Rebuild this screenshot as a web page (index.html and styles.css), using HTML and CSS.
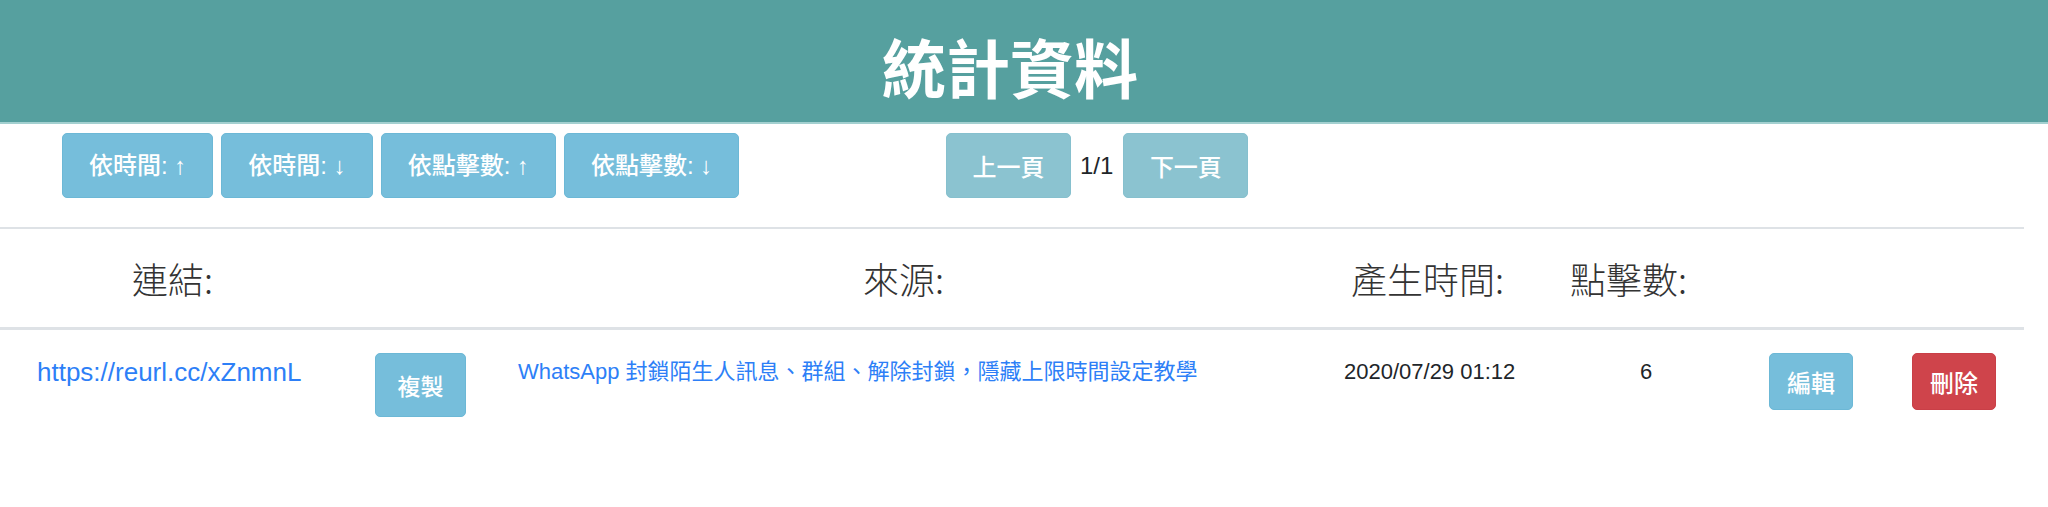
FILE: index.html
```html
<!DOCTYPE html>
<html lang="zh-Hant">
<head>
<meta charset="utf-8">
<title>統計資料</title>
<link rel="stylesheet" href="styles.css">
</head>
<body>
<header class="banner">
  <h1 class="banner-title">統計資料</h1>
</header>
<main class="main">
  <div class="toolbar">
    <div class="sort-group">
      <button class="btn btn-info btn-sort">依時間: ↑</button>
      <button class="btn btn-info btn-sort">依時間: ↓</button>
      <button class="btn btn-info btn-sort">依點擊數: ↑</button>
      <button class="btn btn-info btn-sort">依點擊數: ↓</button>
    </div>
    <div class="pager">
      <button class="btn btn-pager" disabled>上一頁</button>
      <span class="pager-count">1/1</span>
      <button class="btn btn-pager" disabled>下一頁</button>
    </div>
  </div>
  <div class="table-head">
    <div class="th">連結:</div>
    <div class="th">來源:</div>
    <div class="th">產生時間:</div>
    <div class="th">點擊數:</div>
    <div class="th"></div>
  </div>
  <div class="table-row">
    <div class="td"><a class="short-link" href="#">https://reurl.cc/xZnmnL</a></div>
    <div class="td"><button class="btn btn-info btn-copy">複製</button></div>
    <div class="td"><a class="source-link" href="#">WhatsApp 封鎖陌生人訊息、群組、解除封鎖，隱藏上限時間設定教學</a></div>
    <div class="td td-text">2020/07/29 01:12</div>
    <div class="td td-text">6</div>
    <div class="td"><button class="btn btn-info btn-action">編輯</button></div>
    <div class="td"><button class="btn btn-danger btn-action">刪除</button></div>
  </div>
</main>
</body>
</html>
```

FILE: styles.css
```css
* {
  box-sizing: border-box;
}

body {
  margin: 0;
  background: #ffffff;
  color: #212529;
  font-family: "Liberation Sans", "Noto Sans CJK TC", sans-serif;
}

.banner {
  height: 124px;
  background: #56a09f;
  border-bottom: 2px solid #a3d0d0;
  display: flex;
  align-items: center;
  justify-content: center;
  padding-right: 28px;
}

.banner-title {
  margin: 0;
  color: #ffffff;
  font-family: "Noto Sans CJK TC", sans-serif;
  font-size: 64px;
  font-weight: 700;
  line-height: 1;
  padding-top: 8px;
}

.main {
  margin-right: 24px;
}

.toolbar {
  display: grid;
  grid-template-columns: 884px auto;
  padding: 9px 0 29px 62px;
  border-bottom: 2px solid #dee2e6;
}

.sort-group {
  display: flex;
  gap: 8px;
}

.pager {
  display: flex;
  align-items: center;
}

.btn {
  display: inline-flex;
  align-items: center;
  justify-content: center;
  border: 1px solid transparent;
  border-radius: 5px;
  color: #ffffff;
  font-family: "Noto Sans CJK TC", sans-serif;
  font-size: 22px;
  font-weight: 500;
  line-height: 1;
  cursor: pointer;
  white-space: nowrap;
}

.btn-info {
  background: #76bedb;
  border-color: #6cb8d6;
}

.btn-danger {
  background: #cf444b;
  border-color: #c93f47;
}

.btn-sort {
  height: 65px;
  padding: 0 26px;
  font-family: "Liberation Sans", "Noto Sans CJK TC", sans-serif;
  font-size: 24px;
}

.btn-pager {
  width: 125px;
  height: 65px;
  background: #8bc3d0;
  border-color: #86c0ce;
  font-size: 24px;
  cursor: default;
}

.pager-count {
  margin: 0 10px 0 9px;
  font-size: 24px;
  color: #212529;
}

.table-head {
  display: grid;
  grid-template-columns: 731px 488px 219px 200px 1fr;
  align-items: center;
  height: 101px;
  padding-left: 132px;
  border-bottom: 3px solid #dee2e6;
}

.th {
  font-family: "Noto Sans CJK TC", sans-serif;
  font-size: 36px;
  font-weight: 300;
  color: #333333;
  line-height: 1;
}

.table-row {
  display: grid;
  grid-template-columns: 338px 143px 826px 296px 129px 143px 1fr;
  align-items: start;
  padding: 23px 0 0 37px;
}

.td {
  min-height: 38px;
  display: flex;
  align-items: center;
}

.td-text {
  height: 38px;
  font-size: 22px;
  color: #212529;
}

.short-link {
  color: #2d7ff7;
  text-decoration: none;
  font-size: 26px;
  line-height: 38px;
}

.source-link {
  color: #2d7ff7;
  text-decoration: none;
  font-size: 22px;
  line-height: 38px;
  white-space: nowrap;
}

.btn-copy {
  width: 91px;
  height: 64px;
  font-size: 23px;
}

.btn-action {
  width: 84px;
  height: 57px;
  font-size: 24px;
}
```
